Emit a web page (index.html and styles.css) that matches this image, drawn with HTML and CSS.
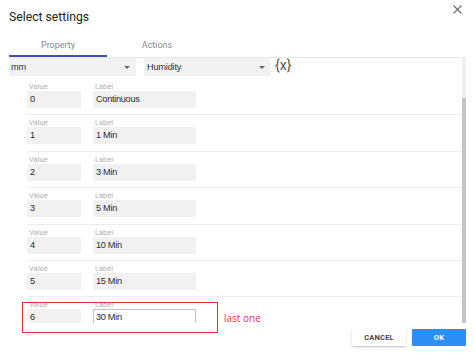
FILE: index.html
```html
<!DOCTYPE html>
<html lang="en">
<head>
  <meta charset="UTF-8" />
  <title>Select settings</title>
  <link rel="stylesheet" href="styles.css">
</head>
<body>
  <div class="dialog">
    <div class="dialog-head">
      <h1>Select settings</h1>
      <button class="close" aria-label="Close">
        <svg width="9" height="9" viewBox="0 0 9 9"><path d="M0.5 0.5 L8.5 8.5 M8.5 0.5 L0.5 8.5" stroke="#6b6b6b" stroke-width="1.1" fill="none"/></svg>
      </button>
    </div>

    <div class="tabs">
      <div class="tab active">Property</div>
      <div class="tab">Actions</div>
    </div>

    <div class="panel">
      <div class="panel-body">
        <div class="select-row">
          <div class="select">mm<span class="caret"></span></div>
          <div class="select">Humidity<span class="caret"></span></div>
          <span class="var">{x}</span>
        </div>

        <div class="rows">
          <div class="row">
            <div class="field short"><label>Value</label><div class="input">0</div></div>
            <div class="field long"><label>Label</label><div class="input">Continuous</div></div>
          </div>
          <div class="row">
            <div class="field short"><label>Value</label><div class="input">1</div></div>
            <div class="field long"><label>Label</label><div class="input">1 Min</div></div>
          </div>
          <div class="row">
            <div class="field short"><label>Value</label><div class="input">2</div></div>
            <div class="field long"><label>Label</label><div class="input">3 Min</div></div>
          </div>
          <div class="row">
            <div class="field short"><label>Value</label><div class="input">3</div></div>
            <div class="field long"><label>Label</label><div class="input">5 Min</div></div>
          </div>
          <div class="row">
            <div class="field short"><label>Value</label><div class="input">4</div></div>
            <div class="field long"><label>Label</label><div class="input">10 Min</div></div>
          </div>
          <div class="row">
            <div class="field short"><label>Value</label><div class="input">5</div></div>
            <div class="field long"><label>Label</label><div class="input">15 Min</div></div>
          </div>
          <div class="row">
            <div class="field short"><label>Value</label><div class="input">6</div></div>
            <div class="field long"><label>Label</label><div class="input editing">30 Min</div></div>
          </div>
        </div>
      </div>
      <div class="scrollbar"><div class="thumb"></div></div>
    </div>

    <div class="actions">
      <button class="btn cancel">CANCEL</button>
      <button class="btn ok">OK</button>
    </div>

    <div class="note-box"></div>
    <div class="note">last one</div>
  </div>
</body>
</html>
```

FILE: styles.css
```css
* {
  margin: 0;
  padding: 0;
  box-sizing: border-box;
}

body {
  font-family: Roboto, "Liberation Sans", sans-serif;
  color: #333;
  background: #fff;
  width: 474px;
  height: 356px;
  overflow: hidden;
}

.dialog {
  position: relative;
  padding: 0 8px 0 9px;
}

.dialog-head {
  display: flex;
  justify-content: space-between;
  align-items: flex-start;
  height: 36px;
}

h1 {
  font-size: 12.2px;
  font-weight: 400;
  color: #222;
  line-height: 18px;
  margin-top: 8px;
}

.close {
  background: none;
  border: none;
  margin-top: 5px;
  margin-right: 4px;
  width: 9px;
  height: 9px;
  display: flex;
}

.tabs {
  display: flex;
  height: 21px;
}

.tab {
  width: 98px;
  text-align: center;
  font-size: 9px;
  color: #8a8a8a;
  line-height: 18px;
}

.tab:nth-child(2) {
  width: 100px;
}

.tab.active {
  border-bottom: 2px solid #3f51b5;
}

.panel {
  display: flex;
  height: 266px;
  border-top: 1px solid #e8e8e8;
}

.panel-body {
  flex: 1;
  overflow: hidden;
}

.select-row {
  display: flex;
  align-items: center;
  gap: 8px;
  height: 18px;
}

.select {
  position: relative;
  width: 127px;
  height: 18px;
  background: #f2f2f2;
  font-family: "Liberation Sans", sans-serif;
  font-size: 9.2px;
  letter-spacing: -0.2px;
  line-height: 18px;
  padding-left: 2px;
  color: #333;
}

.select + .select {
  padding-left: 3px;
}

.caret {
  position: absolute;
  right: 6px;
  top: 8px;
  border-left: 3px solid transparent;
  border-right: 3px solid transparent;
  border-top: 3px solid #666;
}

.var {
  font-size: 14px;
  color: #555;
  margin-left: -4px;
  line-height: 16px;
  margin-top: -4px;
}

.rows {
  padding-left: 18px;
  margin-top: 3px;
}

.row {
  display: flex;
  gap: 12px;
  height: 36.4px;
  padding-top: 3px;
  border-bottom: 1px solid #ececec;
}

.field label {
  display: block;
  font-size: 7.5px;
  color: #b0b0b0;
  line-height: 9px;
  padding-left: 2px;
}

.short {
  width: 54px;
}

.long {
  width: 103px;
}

.input {
  height: 17px;
  background: #f1f1f1;
  font-family: "Liberation Sans", sans-serif;
  font-size: 9.2px;
  letter-spacing: -0.3px;
  line-height: 17px;
  padding-left: 3px;
  color: #2b2b2b;
}

.input.editing {
  background: #fff;
  border: 1px solid #c2c2c2;
  line-height: 15px;
  padding-left: 2px;
}

.scrollbar {
  width: 4px;
  background: #f0f0f0;
  display: flex;
  flex-direction: column;
  justify-content: flex-end;
}

.thumb {
  height: 225px;
  background: #c4c4c4;
}

.actions {
  display: flex;
  justify-content: flex-end;
  gap: 6px;
  margin-top: 6px;
}

.btn {
  width: 54px;
  height: 17px;
  border: none;
  border-radius: 1px;
  font-family: Roboto, "Liberation Sans", sans-serif;
  font-size: 7.5px;
  font-weight: 700;
  letter-spacing: 0.2px;
}

.cancel {
  background: #fff;
  color: #444;
  box-shadow: 0 1px 2px rgba(0, 0, 0, 0.25);
}

.ok {
  background: #2b8ff3;
  color: #fff;
}

/* annotation drawn over the dialog */
.note-box {
  position: absolute;
  left: 22px;
  top: 302px;
  width: 196px;
  height: 31px;
  border: 1.5px solid #e0303a;
}

.note {
  position: absolute;
  left: 224px;
  top: 311px;
  font-family: "Open Sans", sans-serif;
  font-size: 10px;
  color: #e53340;
}
```
